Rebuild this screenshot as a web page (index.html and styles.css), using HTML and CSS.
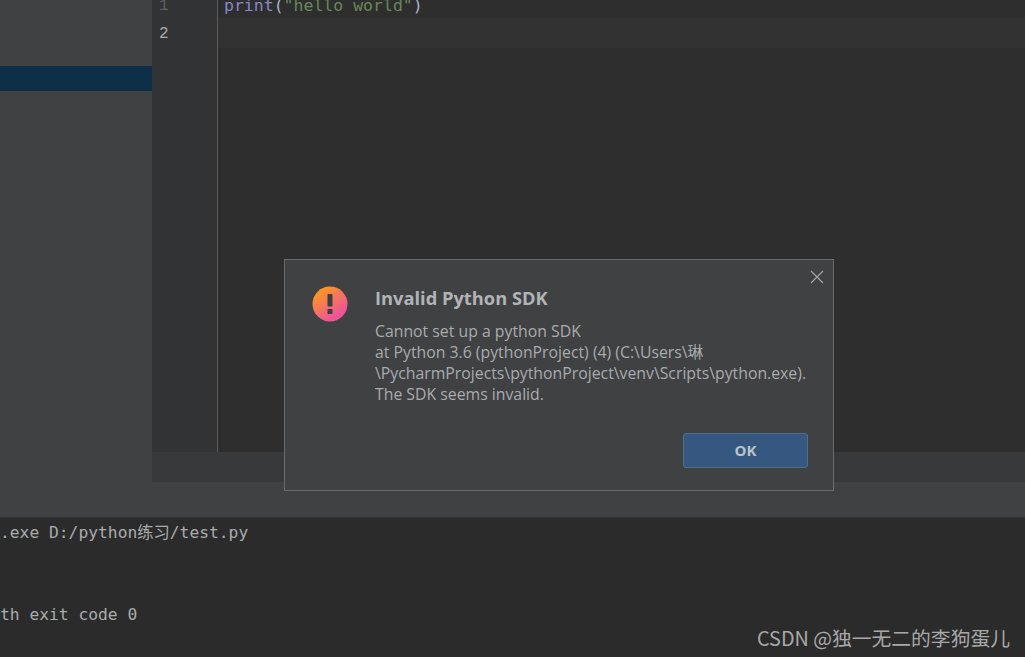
FILE: index.html
```html
<!DOCTYPE html>
<html lang="zh">
<head>
<meta charset="utf-8">
<title>PyCharm</title>
<link rel="stylesheet" href="styles.css">
</head>
<body>
<div class="app">
  <div class="workspace">
    <aside class="sidebar"><div class="selected-row"></div></aside>
    <main class="editor-wrap">
      <div class="editor">
        <div class="gutter">
          <span class="ln">1</span>
          <span class="ln active">2</span>
        </div>
        <div class="code">
          <div class="code-line"><span class="fn">print</span><span class="paren">(</span><span class="str">"hello world"</span><span class="paren">)</span></div>
          <div class="code-line current"></div>
        </div>
      </div>
      <div class="editor-foot"></div>
    </main>
  </div>
  <section class="console">
    <div class="out first">.exe D:/python练习/test.py</div>
    <div class="out second">th exit code 0</div>
    <div class="watermark">CSDN @独一无二的李狗蛋儿</div>
  </section>
</div>
<div class="dialog">
  <svg class="alert" width="36" height="36" viewBox="0 0 36 36">
    <defs><linearGradient id="g" x1="0.15" y1="0.1" x2="0.7" y2="0.85"><stop offset="0" stop-color="#fb9a1e"/><stop offset="1" stop-color="#f0529a"/></linearGradient></defs>
    <circle cx="18" cy="18" r="17.5" fill="url(#g)"/>
    <rect x="15.5" y="8" width="5" height="12.5" rx="0.8" fill="#3c3f41"/>
    <rect x="15.5" y="23" width="5" height="5" rx="0.8" fill="#3c3f41"/>
  </svg>
  <div class="body">
    <h1 class="title">Invalid Python SDK</h1>
    <p class="msg">Cannot set up a python SDK<br>at Python 3.6 (pythonProject) (4) (C:\Users\琳<br>\PycharmProjects\pythonProject\venv\Scripts\python.exe).<br>The SDK seems invalid.</p>
  </div>
  <svg class="close" width="14" height="14" viewBox="0 0 14 14"><path d="M1 1 13 13M13 1 1 13" stroke="#a5a8aa" stroke-width="1.1" fill="none"/></svg>
  <div class="ok">OK</div>
</div>
</body>
</html>
```
FILE: styles.css
```css
* { box-sizing: border-box; }
html, body { margin: 0; height: 100%; overflow: hidden; }
body { background: #3c3f41; font-family: "Open Sans", "Noto Sans CJK SC", sans-serif; }
.app { display: flex; flex-direction: column; height: 657px; }
.workspace { display: flex; height: 517px; background: #3f4143; }
.sidebar { width: 152px; padding-top: 66px; flex: none; }
.selected-row { height: 25px; background: #0d3048; }
.editor-wrap { flex: 1; display: flex; flex-direction: column; }
.editor { display: flex; height: 452px; background: #2e2e2e; }
.gutter { width: 66px; background: #323334; border-right: 1px solid #5a5c5e; display: flex; flex-direction: column; align-items: flex-start; padding-left: 7px; }
.ln { font: 16px/28px "Liberation Mono", monospace; color: #5d6062; height: 28px; margin-top: -8px; margin-bottom: 8px; }
.active { color: #a9abad; }
.code { flex: 1; font: 16.5px/28px "DejaVu Sans Mono", monospace; }
.code-line { height: 18px; line-height: 12px; padding-left: 6px; white-space: pre; }
.current { height: 30px; background: #323232; }
.fn { color: #8888c6; }
.paren { color: #a9b7c6; }
.str { color: #6a8759; }
.editor-foot { height: 30px; background: #37393a; }
.console { flex: 1; background: #2b2b2b; border-top: 1px solid #333; position: relative; font: 16.3px/20px "DejaVu Sans Mono", "Noto Sans CJK SC", monospace; color: #a9abad; }
.out { white-space: pre; }
.first { margin-top: 5px; }
.second { margin-top: 62px; }
.watermark { position: absolute; right: 15px; bottom: 7px; font: 19.8px/24px "Noto Sans CJK SC", sans-serif; color: #a8a8a8; }
.dialog { position: absolute; left: 284px; top: 259px; width: 550px; height: 232px; background: #3f4143; border: 1px solid #6a6c6e; display: flex; padding: 26px 0 0 27px; }
.alert { flex: none; }
.body { margin-left: 27px; }
.title { margin: 0 0 11px; font-size: 18.3px; line-height: 24px; font-weight: 700; color: #b1b4b6; }
.msg { margin: 0; font-size: 15.8px; line-height: 21px; color: #a9abad; white-space: nowrap; }
.close { position: absolute; right: 9px; top: 10px; }
.ok { position: absolute; left: 398px; top: 173px; width: 125px; height: 35px; border-radius: 3px; background: #365880; border: 1px solid #4c708c; color: #bbc3cb; font-weight: 700; font-size: 15px; padding-bottom: 2px; display: flex; align-items: center; justify-content: center; }
```
